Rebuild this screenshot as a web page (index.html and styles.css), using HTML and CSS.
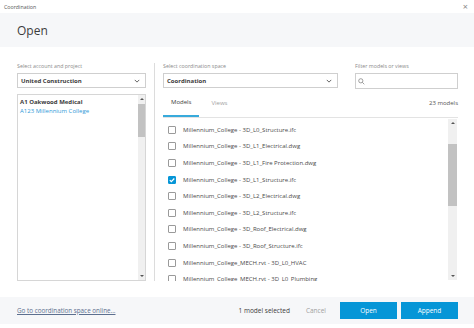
FILE: index.html
```html
<!DOCTYPE html>
<html lang="en">
<head>
    <meta charset="UTF-8">
    <title>Coordination - Open</title>
    <link rel="stylesheet" href="styles.css">
</head>
<body>
    <div class="dialog">
        <div class="titlebar">
            <span>Coordination</span>
            <span class="close">&times;</span>
        </div>
        <div class="header">
            <h1>Open</h1>
        </div>

        <div class="main">
            <div class="left">
                <div class="field-label">Select account and project</div>
                <div class="select">
                    <span>United Construction</span>
                    <svg class="chevron" viewBox="0 0 8 5" width="6" height="4"><path d="M1 1l3 3 3-3" fill="none" stroke="#555" stroke-width="1.2"/></svg>
                </div>
                <div class="project-list">
                    <div class="items">
                        <div class="item">A1 Oakwood Medical</div>
                        <div class="item active">A123 Millennium College</div>
                    </div>
                    <div class="scrollbar small">
                        <span class="arrow up"></span>
                        <div class="track"><div class="thumb" style="height: 33px; margin-top: 1px;"></div></div>
                        <span class="arrow down"></span>
                    </div>
                </div>
            </div>

            <div class="divider"></div>

            <div class="right">
                <div class="fields">
                    <div class="field space">
                        <div class="field-label">Select coordination space</div>
                        <div class="select">
                            <span>Coordination</span>
                            <svg class="chevron" viewBox="0 0 8 5" width="6" height="4"><path d="M1 1l3 3 3-3" fill="none" stroke="#555" stroke-width="1.2"/></svg>
                        </div>
                    </div>
                    <div class="field filter">
                        <div class="field-label">Filter models or views</div>
                        <div class="search">
                            <svg viewBox="0 0 10 10" width="7" height="7"><circle cx="4" cy="4" r="3" fill="none" stroke="#777" stroke-width="1"/><path d="M6.2 6.2L9 9" stroke="#777" stroke-width="1"/></svg>
                        </div>
                    </div>
                </div>

                <div class="tabs">
                    <span class="tab active">Models</span>
                    <span class="tab">Views</span>
                    <span class="count">23 models</span>
                </div>

                <div class="model-list">
                    <div class="rows">
                        <div class="row"><span class="check"></span>Millennium_College - 3D_L0_Structure.ifc</div>
                        <div class="row"><span class="check"></span>Millennium_College - 3D_L1_Electrical.dwg</div>
                        <div class="row"><span class="check"></span>Millennium_College - 3D_L1_Fire Protection.dwg</div>
                        <div class="row"><span class="check checked"><svg viewBox="0 0 8 8" width="8" height="8"><path d="M1.8 4.2l1.5 1.5 3-3.2" fill="none" stroke="#fff" stroke-width="1.2"/></svg></span>Millennium_College - 3D_L1_Structure.ifc</div>
                        <div class="row"><span class="check"></span>Millennium_College - 3D_L2_Electrical.dwg</div>
                        <div class="row"><span class="check"></span>Millennium_College - 3D_L2_Structure.ifc</div>
                        <div class="row"><span class="check"></span>Millennium_College - 3D_Roof_Electrical.dwg</div>
                        <div class="row"><span class="check"></span>Millennium_College - 3D_Roof_Structure.ifc</div>
                        <div class="row"><span class="check"></span>Millennium_College_MECH.rvt - 3D_L0_HVAC</div>
                        <div class="row"><span class="check"></span>Millennium_College_MECH.rvt - 3D_L0_Plumbing</div>
                    </div>
                    <div class="scrollbar">
                        <span class="arrow up"></span>
                        <div class="track"><div class="thumb" style="height: 62px; margin-top: 17px;"></div></div>
                        <span class="arrow down"></span>
                    </div>
                </div>
            </div>
        </div>

        <div class="footer">
            <a href="#" class="online">Go to coordination space online...</a>
            <div class="actions">
                <span class="selected">1 model selected</span>
                <span class="cancel">Cancel</span>
                <button class="btn">Open</button>
                <button class="btn">Append</button>
            </div>
        </div>
    </div>
</body>
</html>
```

FILE: styles.css
```css
body {
    margin: 0;
    font-family: "Open Sans", "Noto Sans", sans-serif;
    color: #3c3c3c;
    background: #fff;
}
.dialog {
    width: 474px;
    height: 328px;
    display: flex;
    flex-direction: column;
    overflow: hidden;
}
.titlebar {
    height: 13px;
    display: flex;
    justify-content: space-between;
    align-items: center;
    padding: 0 6px 0 4px;
    font-size: 5.3px;
    color: #555;
}
.titlebar .close {
    font-size: 9px;
    color: #888;
}
.header {
    height: 34px;
    background: #f6f7f9;
    display: flex;
    align-items: center;
    padding-left: 17px;
}
.header h1 {
    margin: 0;
    font-size: 12px;
    font-weight: normal;
    color: #3c3c3c;
}
.main {
    flex: 1;
    display: flex;
    padding: 16px 16px 16px 17px;
    min-height: 0;
}
.field-label {
    font-size: 5.3px;
    color: #8a8a8a;
    height: 7px;
    line-height: 7px;
    margin-bottom: 3px;
}
.left {
    width: 129px;
    display: flex;
    flex-direction: column;
}
.select {
    height: 13px;
    border: 1px solid #cfcfcf;
    display: flex;
    align-items: center;
    justify-content: space-between;
    padding: 0 5px 0 3px;
    font-size: 6px;
    font-weight: bold;
    color: #3c3c3c;
}
.project-list {
    flex: 1;
    margin-top: 6px;
    border: 1px solid #d6d6d6;
    display: flex;
}
.items {
    flex: 1;
    padding: 3px 2px;
}
.item {
    font-size: 6px;
    line-height: 8.5px;
    font-weight: bold;
    color: #3c3c3c;
}
.item.active {
    color: #2f9ad8;
    font-weight: normal;
}
.divider {
    width: 1px;
    background: #dcdcdc;
    margin: 0 8px;
}
.right {
    flex: 1;
    display: flex;
    flex-direction: column;
}
.fields {
    display: flex;
    gap: 17px;
}
.field.space {
    width: 175px;
}
.field.filter {
    flex: 1;
}
.search {
    height: 16px;
    border: 1px solid #cfcfcf;
    display: flex;
    align-items: center;
    padding-left: 2px;
    box-sizing: border-box;
}
.tabs {
    display: flex;
    align-items: center;
    height: 28px;
    border-bottom: 1px solid #e3e3e3;
    font-size: 6px;
}
.tab {
    height: 100%;
    display: flex;
    align-items: center;
    padding: 0 8px;
    color: #a0a0a0;
    box-sizing: border-box;
}
.tab.active {
    color: #3c3c3c;
    border-bottom: 2px solid #38aadb;
    margin-right: 4px;
}
.count {
    margin-left: auto;
    color: #555;
}
.model-list {
    flex: 1;
    display: flex;
    min-height: 0;
    overflow: hidden;
}
.rows {
    flex: 1;
    padding: 3.5px 0 0 5px;
}
.row {
    height: 16.6px;
    display: flex;
    align-items: center;
    font-size: 6px;
    color: #4a4a4a;
}
.check {
    width: 8px;
    height: 8px;
    border: 1px solid #9a9a9a;
    border-radius: 1px;
    box-sizing: border-box;
    margin-right: 7px;
    flex: none;
    display: flex;
}
.check.checked {
    background: #0696d7;
    border-color: #0696d7;
}
.check svg {
    margin: -1px;
}
.scrollbar {
    width: 9px;
    margin: 1px 1px 1px 0;
    background: #f0f0f0;
    display: flex;
    flex-direction: column;
    align-items: center;
}
.scrollbar.small {
    width: 7px;
    margin: 0;
}
.arrow {
    width: 0;
    height: 0;
    border-left: 2px solid transparent;
    border-right: 2px solid transparent;
    margin: 3px 0;
}
.arrow.up {
    border-bottom: 2px solid #555;
}
.arrow.down {
    border-top: 2px solid #555;
}
.track {
    flex: 1;
    width: 100%;
}
.thumb {
    background: #c2c2c2;
    width: 100%;
}
.footer {
    height: 27px;
    margin-bottom: 4px;
    background: #f6f7f9;
    display: flex;
    align-items: center;
    justify-content: space-between;
    padding: 0 16px 0 17px;
}
.online {
    font-size: 6.3px;
    color: #5c6f8f;
    text-decoration: underline;
}
.actions {
    display: flex;
    align-items: center;
    font-size: 6.5px;
}
.selected {
    color: #3c3c3c;
    margin-right: 16px;
}
.cancel {
    color: #a0a0a0;
    margin-right: 10px;
}
.btn {
    width: 57px;
    height: 17px;
    border: none;
    background: #0696d7;
    color: #fff;
    font-family: "Open Sans", "Noto Sans", sans-serif;
    font-size: 6.5px;
    margin-left: 4px;
    padding: 0;
}
```
